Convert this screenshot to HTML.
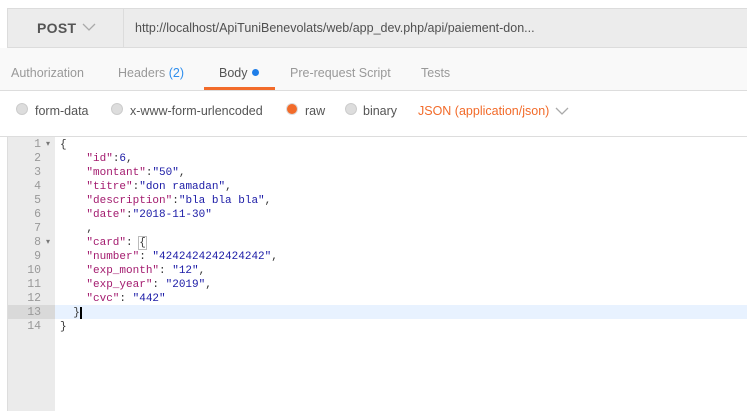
<!DOCTYPE html>
<html><head><style>
body{margin:0;width:747px;height:411px;overflow:hidden;background:#fff;font-family:"Liberation Sans",sans-serif;position:relative}
.a{position:absolute}
.code{font-family:"Liberation Mono",monospace;font-size:11px;line-height:14px;white-space:pre}
.k{color:#a31a6e}.s{color:#1a1aa6}.n{color:#1a1aa6}.p{color:#333}
.ln{color:#999;text-align:right;width:33px;font-size:11.5px}
</style></head><body>
<div class="a" style="left:7px;top:8px;width:740px;height:38px;background:#ececec;border:1px solid #dcdcdc;border-right:none"></div>
<div class="a" style="left:123px;top:9px;width:1px;height:38px;background:#dcdcdc"></div>
<div class="a" style="left:37px;top:20px;font-size:14px;color:#555;font-weight:bold;letter-spacing:.3px">POST</div>
<svg class="a" style="left:82px;top:22px" width="14" height="10"><path d="M1 2 L7 8 L13 2" stroke="#aaa" stroke-width="1.3" fill="none"/></svg>
<div class="a" style="left:135px;top:21px;font-size:12.5px;color:#505050">http://localhost/ApiTuniBenevolats/web/app_dev.php/api/paiement-don...</div>
<div class="a" style="left:0;top:48px;width:747px;height:42px;background:#f9f9f9;border-bottom:1px solid #ddd"></div>
<div class="a" style="left:11px;top:66px;font-size:12.5px;color:#999">Authorization</div>
<div class="a" style="left:118px;top:66px;font-size:12.5px;color:#999">Headers <span style="color:#2f8eed">(2)</span></div>
<div class="a" style="left:219px;top:66px;font-size:12.5px;color:#555">Body</div>
<div class="a" style="left:252px;top:69px;width:7px;height:7px;border-radius:50%;background:#1f7ee8"></div>
<div class="a" style="left:204px;top:87px;width:71px;height:3px;background:#f26b2a"></div>
<div class="a" style="left:290px;top:66px;font-size:12.5px;color:#999">Pre-request Script</div>
<div class="a" style="left:421px;top:66px;font-size:12.5px;color:#999">Tests</div>
<div class="a" style="left:16px;top:103px;width:10px;height:10px;border-radius:50%;background:#ddd;border:1px solid #ccc"></div>
<div class="a" style="left:35px;top:104px;font-size:12.5px;color:#555">form-data</div>
<div class="a" style="left:111px;top:103px;width:10px;height:10px;border-radius:50%;background:#ddd;border:1px solid #ccc"></div>
<div class="a" style="left:130px;top:104px;font-size:12.5px;color:#555">x-www-form-urlencoded</div>
<div class="a" style="left:286px;top:103px;width:10px;height:10px;border-radius:50%;background:#f26b2a;border:1px solid #ddd"></div>
<div class="a" style="left:305px;top:104px;font-size:12.5px;color:#555">raw</div>
<div class="a" style="left:345px;top:103px;width:10px;height:10px;border-radius:50%;background:#ddd;border:1px solid #ccc"></div>
<div class="a" style="left:363px;top:104px;font-size:12.5px;color:#555">binary</div>
<div class="a" style="left:418px;top:104px;font-size:12.5px;color:#f26b2a">JSON (application/json)</div>
<svg class="a" style="left:555px;top:107px" width="14" height="9"><path d="M1 1 L7 7 L13 1" stroke="#aaa" stroke-width="1.3" fill="none"/></svg>
<div class="a" style="left:0;top:136px;width:747px;height:1px;background:#ddd"></div>
<div class="a" style="left:7px;top:137px;width:1px;height:274px;background:#ddd"></div>
<div class="a" style="left:8px;top:137px;width:47px;height:274px;background:#ebebeb"></div>
<div class="a" style="left:55px;top:305px;width:692px;height:14px;background:#e8f2ff"></div>
<div class="a" style="left:8px;top:305px;width:47px;height:14px;background:#d9d9d9"></div>
<div class="a code ln" style="left:8px;top:138px">1
2
3
4
5
6
7
8
9
10
11
12
13
14</div>
<div class="a code" style="left:46px;top:138px;color:#777;font-size:8px">▾</div>
<div class="a code" style="left:46px;top:236px;color:#777;font-size:8px">▾</div>
<div class="a code p" style="left:60px;top:138px">{
    <span class="k">"id"</span>:<span class="n">6</span>,
    <span class="k">"montant"</span>:<span class="s">"50"</span>,
    <span class="k">"titre"</span>:<span class="s">"don ramadan"</span>,
    <span class="k">"description"</span>:<span class="s">"bla bla bla"</span>,
    <span class="k">"date"</span>:<span class="s">"2018-11-30"</span>
    ,
    <span class="k">"card"</span>: <span style="outline:1px solid #bbb">{</span>
    <span class="k">"number"</span>: <span class="s">"4242424242424242"</span>,
    <span class="k">"exp_month"</span>: <span class="s">"12"</span>,
    <span class="k">"exp_year"</span>: <span class="s">"2019"</span>,
    <span class="k">"cvc"</span>: <span class="s">"442"</span>
  }<span style="border-left:2px solid #000"></span>
}</div>
</body></html>
